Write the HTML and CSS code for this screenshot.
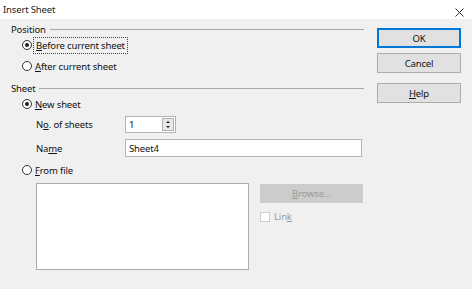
FILE: index.html
```html
<!DOCTYPE html>
<html lang="en">
<head>
    <meta charset="UTF-8">
    <title>Insert Sheet</title>
    <link rel="stylesheet" href="styles.css">
</head>
<body>
    <div class="window">
        <div class="titlebar">
            <span class="title">Insert Sheet</span>
            <svg class="close" width="9" height="9" viewBox="0 0 9 9">
                <path d="M0.5 0.5 L8.5 8.5 M8.5 0.5 L0.5 8.5" stroke="#333" stroke-width="1"/>
            </svg>
        </div>
        <div class="body">
            <div class="main">
                <div class="frame-head"><span>Position</span><div class="rule"></div></div>
                <div class="option before">
                    <span class="radio checked"></span>
                    <span class="focus"><u>B</u>efore current sheet</span>
                </div>
                <div class="option after">
                    <span class="radio"></span>
                    <span><u>A</u>fter current sheet</span>
                </div>

                <div class="frame-head sheet"><span>Sheet</span><div class="rule"></div></div>
                <div class="option new">
                    <span class="radio checked"></span>
                    <span><u>N</u>ew sheet</span>
                </div>
                <div class="field count">
                    <span class="field-label">N<u>o</u>. of sheets</span>
                    <div class="spin">
                        <span class="spin-value">1</span>
                        <span class="spin-btns">
                            <span class="arrow up"></span>
                            <span class="arrow down"></span>
                        </span>
                    </div>
                </div>
                <div class="field name">
                    <span class="field-label">Na<u>m</u>e</span>
                    <div class="text-input">Sheet4</div>
                </div>
                <div class="option from">
                    <span class="radio"></span>
                    <span><u>F</u>rom file</span>
                </div>
                <div class="file-row">
                    <div class="listbox"></div>
                    <div class="file-side">
                        <div class="browse"><u>B</u>rowse...</div>
                        <div class="link"><span class="check"></span><span>Lin<u>k</u></span></div>
                    </div>
                </div>
            </div>
            <div class="buttons">
                <div class="btn default">OK</div>
                <div class="btn">Cancel</div>
                <div class="btn help"><u>H</u>elp</div>
            </div>
        </div>
    </div>
</body>
</html>
```

FILE: styles.css
```css
body {
    margin: 0;
    background: #ffffff;
    font-family: "Noto Sans", "Open Sans", sans-serif;
    font-size: 9.5px;
    letter-spacing: -0.15px;
    color: #111;
}
u {
    text-decoration: underline;
    text-underline-offset: 1px;
}
.window {
    width: 472px;
    height: 289px;
    display: flex;
    flex-direction: column;
}
.titlebar {
    height: 19px;
    display: flex;
    align-items: center;
    justify-content: space-between;
    padding: 0 8px 0 3px;
    background: #ffffff;
}
.title {
    color: #222;
}
.close {
    margin-top: 5px;
}
.body {
    flex: 1;
    background: #f0f0f0;
    display: flex;
    padding: 3px 11px 0 11px;
}
.main {
    width: 354px;
}
.frame-head {
    display: flex;
    align-items: center;
    gap: 4px;
    height: 14px;
}
.frame-head .rule {
    flex: 1;
    height: 1px;
    background: #a8a8a8;
}
.frame-head.sheet {
    margin-top: 8px;
}
.option {
    display: flex;
    align-items: center;
    height: 14px;
    margin-left: 11px;
    gap: 3px;
}
.option.before {
    margin-top: 2px;
}
.option.after {
    margin-top: 7px;
}
.option.new {
    margin-top: 2px;
}
.option.from {
    margin-top: 6px;
}
.radio {
    width: 10px;
    height: 10px;
    box-sizing: border-box;
    border: 1px solid #333;
    border-radius: 50%;
    background: #fff;
    display: flex;
    align-items: center;
    justify-content: center;
}
.radio.checked::after {
    content: "";
    width: 4px;
    height: 4px;
    border-radius: 50%;
    background: #222;
}
.focus {
    outline: 1px dotted #444;
    outline-offset: 1px;
    padding: 0 1px;
}
.field {
    display: flex;
    align-items: center;
    margin-left: 25px;
}
.field.count {
    margin-top: 5px;
}
.field.name {
    margin-top: 6px;
}
.field-label {
    width: 89px;
}
.spin {
    width: 51px;
    height: 17px;
    border: 1px solid #b4b4b4;
    background: #fff;
    display: flex;
    align-items: center;
    justify-content: space-between;
    padding-left: 3px;
    box-sizing: border-box;
}
.spin-btns {
    width: 10px;
    height: 11px;
    border: 1px solid #b0b0b0;
    background: #e8e8e8;
    margin-right: 1px;
    display: flex;
    flex-direction: column;
    align-items: center;
    justify-content: space-around;
}
.arrow {
    width: 0;
    height: 0;
    border-left: 2px solid transparent;
    border-right: 2px solid transparent;
}
.arrow.up {
    border-bottom: 2px solid #222;
}
.arrow.down {
    border-top: 2px solid #222;
}
.text-input {
    width: 237px;
    height: 18px;
    border: 1px solid #b4b4b4;
    background: #fff;
    box-sizing: border-box;
    padding-left: 3px;
    display: flex;
    align-items: center;
}
.file-row {
    display: flex;
    margin: 6px 0 0 25px;
    gap: 11px;
}
.listbox {
    width: 213px;
    height: 87px;
    border: 1px solid #adadad;
    background: #fff;
    box-sizing: border-box;
}
.file-side {
    display: flex;
    flex-direction: column;
    gap: 7px;
    padding-top: 1px;
}
.browse {
    width: 103px;
    height: 19px;
    background: #cccccc;
    box-sizing: border-box;
    color: #9a9a9a;
    display: flex;
    align-items: center;
    justify-content: center;
}
.link {
    display: flex;
    align-items: center;
    gap: 4px;
    color: #9a9a9a;
}
.check {
    width: 10px;
    height: 10px;
    box-sizing: border-box;
    border: 1px solid #cccccc;
    background: #ffffff;
}
.buttons {
    margin-left: 13px;
    padding-top: 6px;
    display: flex;
    flex-direction: column;
    gap: 5px;
}
.btn {
    width: 84px;
    height: 20px;
    box-sizing: border-box;
    background: #e1e1e1;
    border: 1px solid #adadad;
    display: flex;
    align-items: center;
    justify-content: center;
}
.btn.default {
    border: 2px solid #0078d7;
}
.btn.help {
    margin-top: 5px;
}
```
